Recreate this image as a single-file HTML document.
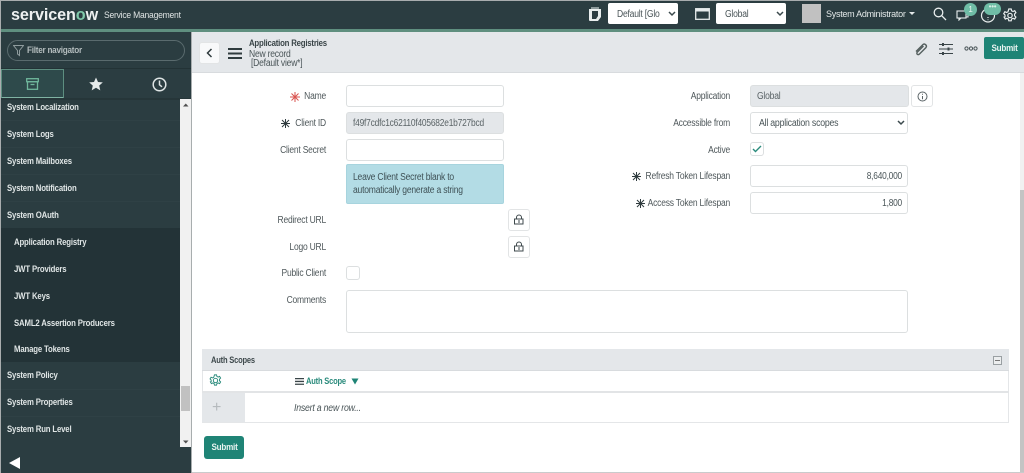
<!DOCTYPE html>
<html><head><meta charset="utf-8">
<style>
html,body{margin:0;padding:0}
body{width:1024px;height:473px;position:relative;overflow:hidden;background:#fff;font-family:"Liberation Sans",sans-serif;font-size:10px;color:#4a5558;letter-spacing:-.25px}
div,span,svg{position:absolute;box-sizing:border-box}
.t{white-space:nowrap;line-height:12px;transform-origin:0 50%;transform:scaleX(var(--s,.855))}
.r{transform-origin:100% 50%}
.nav{left:7px;color:#dfe5e5;font-weight:bold;font-size:9.5px;letter-spacing:-.2px;white-space:nowrap;line-height:12px;transform-origin:0 50%;transform:scaleX(.82)}
.sub{left:14px}
.lab{white-space:nowrap;text-align:right;line-height:12px;width:160px;color:#50595c;transform-origin:100% 50%;transform:scaleX(.85)}
.in{background:#fff;border:1px solid #dcdfe0;border-radius:3px;height:22px}
.ro{background:#e4e7ea}
.btn{background:#fff;border:1px solid #e2e4e5;border-radius:3px;width:22px;height:22px}
.sel{background:#fff;border-radius:2px;height:21px;color:#4a5558}
</style></head><body>
<!-- outer -->
<div style="left:0;top:0;width:1024px;height:1px;background:#a9adae"></div>
<div style="left:0;top:0;width:1px;height:473px;background:#a9adae"></div>
<div style="left:1px;top:1px;width:1023px;height:28px;background:#2b3d41"></div>
<div style="left:1px;top:29px;width:1023px;height:3px;background:#5f8f7f"></div>
<div class="t" style="--s:.95;left:11px;top:5px;font-size:17px;line-height:20px;font-weight:bold;color:#eef1f1;letter-spacing:-.1px">servicen<span style="position:static;color:#7fc8a9">o</span>w</div>
<div class="t" style="--s:.9;left:104px;top:10px;color:#dfe4e4;font-size:9.5px">Service Management</div>
<!-- header right -->
<svg style="left:588px;top:6px" width="14" height="16" viewBox="0 0 14 16"><path d="M3 1h8v2H3z" fill="#8d9a9b"/><path d="M1 3h8l4 0v8l-3 4H2a1 1 0 0 1-1-1z" fill="#e9eeee"/><path d="M4 5h6v5l-2 3H4z" fill="#2b3d41"/></svg>
<div class="sel" style="left:608px;top:3px;width:70px"><span class="t" style="left:9px;top:6px">Default [Glo</span></div>
<svg style="left:668px;top:11px" width="8" height="6"><path d="M1 1l3 3 3-3" fill="none" stroke="#3b4a4d" stroke-width="1.5"/></svg>
<svg style="left:695px;top:8px" width="15" height="12"><rect x=".7" y=".7" width="13.6" height="10.6" fill="none" stroke="#e6ebeb" stroke-width="1.3"/><rect x="1" y="1" width="13" height="2.5" fill="#e6ebeb"/></svg>
<div class="sel" style="left:716px;top:3px;width:70px"><span class="t" style="left:9px;top:6px">Global</span></div>
<svg style="left:776px;top:11px" width="8" height="6"><path d="M1 1l3 3 3-3" fill="none" stroke="#3b4a4d" stroke-width="1.5"/></svg>
<div style="left:802px;top:4px;width:19px;height:19px;background:#c1c1c1"></div>
<div class="t" style="--s:.95;left:826px;top:9px;color:#e4e9e9;font-size:9.5px;letter-spacing:-.3px">System Administrator</div>
<svg style="left:909px;top:12px" width="7" height="4"><path d="M0 0h6l-3 3z" fill="#e4e9e9"/></svg>
<svg style="left:933px;top:7px" width="14" height="14" fill="none" stroke="#e8eded" stroke-width="1.3"><circle cx="5.5" cy="5.5" r="4.3"/><path d="M8.7 8.700l4.300 4.300"/></svg>
<svg style="left:956px;top:8px" width="14" height="13" fill="none" stroke="#e8eded" stroke-width="1.1"><rect x="1" y="3" width="9" height="7"/><path d="M3 10v2l2-2"/><path d="M10 4h2v5h-2"/></svg>
<div style="left:964px;top:3px;width:13px;height:13px;border-radius:50%;background:#6fbda6;color:#eaf5f1;font-size:8px;line-height:13px;text-align:center">1</div>
<svg style="left:980px;top:7px" width="16" height="16" fill="none" stroke="#e8eded" stroke-width="1.2"><circle cx="8" cy="8.5" r="6.5"/><path d="M8 10v1M8 12.500v.6"/></svg>
<div style="left:984px;top:3px;width:17px;height:12px;border-radius:6px;background:#6fbda6;color:#d8efe6;font-size:8px;line-height:8px;text-align:center">•••</div>
<svg style="left:1003px;top:8px" width="14" height="15" viewBox="0 0 14 15" fill="none" stroke="#e8eded" stroke-width="1.2"><circle cx="7" cy="7.5" r="2.2"/><path d="M5.8 1h2.400l.4 1.800 1.500.7 1.600-.8 1.200 2-1.300 1.300v1.800l1.300 1.300-1.200 2-1.600-.8-1.500.7-.4 1.800H5.800l-.4-1.800-1.500-.7-1.600.8-1.200-2L2 8.800V7L.7 5.700l1.200-2 1.600.8 1.500-.7z"/></svg>

<!-- nav -->
<div style="left:1px;top:32px;width:190px;height:441px;background:#2b3d41"></div>
<div style="left:191px;top:32px;width:1px;height:441px;background:#a8adae"></div>
<div style="left:7px;top:40px;width:178px;height:21px;border:1px solid #5a6b6e;border-radius:11px"></div>
<svg style="left:13px;top:45px" width="11" height="12" fill="none" stroke="#8f9c9e" stroke-width="1"><path d="M.5 .5h10L6.500 5.500v5l-2-1.500V5.500z"/></svg>
<div class="t" style="--s:.86;left:27px;top:45px;color:#b4bdbe;font-size:9.5px;font-weight:bold;letter-spacing:-.3px">Filter navigator</div>
<div style="left:1px;top:68px;width:190px;height:1px;background:#233336"></div>
<div style="left:1px;top:69px;width:63px;height:30px;border:1px solid #5d8e80;border-bottom:2px solid #7fb3a3;background:#2e4a4b"></div>
<svg style="left:26px;top:78px" width="13" height="12" fill="none" stroke="#6fb79c" stroke-width="1.3"><rect x=".7" y=".7" width="11.600" height="3"/><rect x="1.500" y="3.700" width="10" height="7.600"/><path d="M4.500 6.500h4"/></svg>
<svg style="left:89px;top:77px" width="14" height="14" viewBox="0 0 14 14"><path d="M7 .5l2 4.500 4.800.4-3.600 3.200 1.100 4.800L7 10.800 2.700 13.400l1.100-4.800L.2 5.400 5 5z" fill="#e6ebeb"/></svg>
<svg style="left:152px;top:77px" width="15" height="15" fill="none" stroke="#dfe5e5" stroke-width="1.500"><circle cx="7.500" cy="7.500" r="6.300"/><path d="M7.500 3.500v4.300l2.500 2"/></svg>
<div style="left:1px;top:98px;width:190px;height:2px;background:#263639"></div>
<!-- list rows -->
<div style="left:1px;top:228px;width:179px;height:134px;background:#233337"></div>
<div style="left:1px;top:120px;width:179px;height:1px;background:#2f4145"></div>
<div style="left:1px;top:147px;width:179px;height:1px;background:#2f4145"></div>
<div style="left:1px;top:174px;width:179px;height:1px;background:#2f4145"></div>
<div style="left:1px;top:201px;width:179px;height:1px;background:#2f4145"></div>
<div style="left:1px;top:389px;width:179px;height:1px;background:#2f4145"></div>
<div style="left:1px;top:416px;width:179px;height:1px;background:#2f4145"></div>
<div class="nav" style="top:102px">System Localization</div>
<div class="nav" style="top:129px">System Logs</div>
<div class="nav" style="top:156px">System Mailboxes</div>
<div class="nav" style="top:183px">System Notification</div>
<div class="nav" style="top:210px">System OAuth</div>
<div class="nav sub" style="top:237px">Application Registry</div>
<div class="nav sub" style="top:264px">JWT Providers</div>
<div class="nav sub" style="top:291px">JWT Keys</div>
<div class="nav sub" style="top:318px">SAML2 Assertion Producers</div>
<div class="nav sub" style="top:344px">Manage Tokens</div>
<div class="nav" style="top:370px">System Policy</div>
<div class="nav" style="top:397px">System Properties</div>
<div class="nav" style="top:424px">System Run Level</div>
<!-- nav scrollbar -->
<div style="left:180px;top:99px;width:11px;height:348px;background:#f1f1f1"></div>
<div style="left:181px;top:386px;width:9px;height:25px;background:#c1c1c1"></div>
<svg style="left:183px;top:103px" width="6" height="4"><path d="M0 3.500h5.500L2.800 .5z" fill="#505050"/></svg>
<svg style="left:183px;top:440px" width="6" height="4"><path d="M0 .5h5.500L2.800 3.500z" fill="#505050"/></svg>
<svg style="left:8px;top:456px" width="13" height="14"><path d="M12 1v12L1 7z" fill="#fff"/></svg>

<!-- subheader -->
<div style="left:192px;top:32px;width:832px;height:41px;background:#e4e7ea"></div>
<div style="left:192px;top:72px;width:832px;height:1px;background:#d8dbde"></div>
<div class="btn" style="left:199px;top:42px;height:22px;width:21px;background:#f8f9fa"></div>
<svg style="left:206px;top:48px" width="7" height="10" fill="none" stroke="#2f3b3e" stroke-width="1.500"><path d="M5.500 1L1.500 5l4 4"/></svg>
<svg style="left:228px;top:48px" width="14" height="11"><path d="M0 0h14v2H0zM0 4.500h14v2H0zM0 9h14v2H0z" fill="#2f3b3e"/></svg>
<div class="t" style="--s:.87;left:249px;top:37px;color:#3a4548;font-weight:bold;font-size:9px;letter-spacing:-.25px">Application Registries</div>
<div class="t" style="left:249px;top:49px">New record</div>
<div class="t" style="left:251px;top:58px">[Default view*]</div>
<svg style="left:914px;top:42px" width="15" height="15" fill="none" stroke="#55605f" stroke-width="1.400"><path d="M2 9.500L9 2.500c1.500-1.500 4.500 1 3 3L5.500 12c-1.500 1.500-3.500-.2-2.300-1.700L9.500 4"/></svg>
<svg style="left:939px;top:42px" width="14" height="14"><path d="M0 2h14v1H0zM0 6.500h14v1H0zM0 11h14v1H0z" fill="#3a4548"/><path d="M3 1h2v3H3zM8.500 5.500h2v3h-2zM3 10h2v3H3z" fill="#3a4548"/></svg>
<svg style="left:964px;top:46px" width="14" height="5" fill="none" stroke="#4a5558"><circle cx="2.500" cy="2.500" r="1.600"/><circle cx="7" cy="2.500" r="1.600"/><circle cx="11.500" cy="2.500" r="1.600"/></svg>
<div style="left:984px;top:37px;width:40px;height:22px;background:#1f8476;border-radius:2px;color:#e8f3f0;text-align:center;line-height:22px;font-size:9px;font-weight:bold"><span style="position:static;display:inline-block;transform:scaleX(.9)">Submit</span></div>

<!-- form left -->
<svg style="left:290px;top:92px" width="10" height="10" stroke="#d9534f" stroke-width="1"><path d="M5 0v10M0 5h10M1.500 1.500l7 7M8.500 1.500l-7 7"/></svg>
<div class="lab" style="left:166px;top:91px">Name</div>
<div class="in" style="left:346px;top:85px;width:158px"></div>
<svg style="left:281px;top:119px" width="9" height="9" stroke="#2f3b3e" stroke-width="1"><path d="M4.500 0v9M0 4.500h9M1 1l7 7M8 1l-7 7"/></svg>
<div class="lab" style="left:166px;top:118px">Client ID</div>
<div class="in ro" style="left:346px;top:112px;width:158px"></div>
<div class="t" style="--s:.84;left:353px;top:118px;color:#5a6366">f49f7cdfc1c62110f405682e1b727bcd</div>
<div class="lab" style="left:166px;top:145px">Client Secret</div>
<div class="in" style="left:346px;top:139px;width:158px"></div>
<div style="left:346px;top:164px;width:158px;height:40px;background:#b3dce5;border:1px solid #a7d4de;border-radius:2px"></div>
<div class="t" style="--s:.855;left:353px;top:171px;color:#3f5156;line-height:13px">Leave Client Secret blank to<br>automatically generate a string</div>
<div class="lab" style="left:166px;top:215px">Redirect URL</div>
<div class="btn" style="left:508px;top:209px"></div>
<svg style="left:514px;top:214px" width="10" height="11" fill="none" stroke="#3f4a4d"><path d="M2.500 5V3.500a2.500 2.500 0 0 1 5 0V5"/><rect x=".5" y="5" width="8.500" height="5"/><path d="M5 6v3"/></svg>
<div class="lab" style="left:166px;top:242px">Logo URL</div>
<div class="btn" style="left:508px;top:236px"></div>
<svg style="left:514px;top:241px" width="10" height="11" fill="none" stroke="#3f4a4d"><path d="M2.500 5V3.500a2.500 2.500 0 0 1 5 0V5"/><rect x=".5" y="5" width="8.500" height="5"/><path d="M5 6v3"/></svg>
<div class="lab" style="left:166px;top:268px">Public Client</div>
<div class="in" style="left:346px;top:266px;width:14px;height:14px"></div>
<div class="lab" style="left:166px;top:295px">Comments</div>
<div class="in" style="left:346px;top:290px;width:562px;height:43px"></div>

<!-- form right -->
<div class="lab" style="left:570px;top:91px">Application</div>
<div class="in ro" style="left:750px;top:85px;width:159px"></div>
<div class="t" style="left:757px;top:91px;color:#5a6366">Global</div>
<div class="btn" style="left:911px;top:85px"></div>
<svg style="left:917px;top:91px" width="11" height="11" fill="none" stroke="#5a6366"><circle cx="5.500" cy="5.500" r="4.500"/><path d="M5.500 5v3.200M5.500 2.800v1"/></svg>
<div class="lab" style="left:570px;top:118px">Accessible from</div>
<div class="in" style="left:750px;top:112px;width:158px"></div>
<div class="t" style="--s:.875;left:759px;top:118px;color:#4a5558">All application scopes</div>
<svg style="left:897px;top:120px" width="8" height="6"><path d="M1 1l3 3 3-3" fill="none" stroke="#3b4a4d" stroke-width="1.500"/></svg>
<div class="lab" style="left:570px;top:145px">Active</div>
<div class="in" style="left:750px;top:142px;width:14px;height:14px"></div>
<svg style="left:752px;top:145px" width="10" height="8" fill="none" stroke="#2a8b7c" stroke-width="1.400"><path d="M1 4l2.500 2.500L9 1"/></svg>
<svg style="left:632px;top:172px" width="9" height="9" stroke="#2f3b3e"><path d="M4.500 0v9M0 4.500h9M1 1l7 7M8 1l-7 7"/></svg>
<div class="lab" style="left:570px;top:171px">Refresh Token Lifespan</div>
<div class="in" style="left:750px;top:165px;width:158px"></div>
<div class="t r" style="--s:.835;left:750px;top:171px;width:152px;text-align:right">8,640,000</div>
<svg style="left:636px;top:199px" width="9" height="9" stroke="#2f3b3e"><path d="M4.500 0v9M0 4.500h9M1 1l7 7M8 1l-7 7"/></svg>
<div class="lab" style="left:570px;top:198px">Access Token Lifespan</div>
<div class="in" style="left:750px;top:192px;width:158px"></div>
<div class="t r" style="--s:.835;left:750px;top:198px;width:152px;text-align:right">1,800</div>

<!-- related list -->
<div style="left:202px;top:349px;width:807px;height:74px;border:1px solid #e4e6e8;border-top:0"></div>
<div style="left:202px;top:349px;width:807px;height:21px;background:#e4e7ea"></div>
<div class="t" style="--s:.84;left:211px;top:354px;color:#3f4a4d;font-weight:bold;font-size:9px">Auth Scopes</div>
<div style="left:993px;top:356px;width:9px;height:9px;border:1px solid #9aa0a3;background:#eceeef"></div>
<div style="left:995px;top:360px;width:5px;height:1px;background:#777"></div>
<div style="left:202px;top:370px;width:807px;height:1px;background:#d8dbde"></div>
<div style="left:202px;top:391px;width:807px;height:2px;background:#e2e4e6"></div>
<svg style="left:209px;top:374px" width="13" height="13" viewBox="0 0 14 15" fill="none" stroke="#2a8b7c" stroke-width="1.100"><circle cx="7" cy="7.500" r="2.500"/><path d="M5.800 1h2.400l.4 1.800 1.500.7 1.600-.8 1.200 2-1.300 1.300v1.800l1.300 1.300-1.200 2-1.600-.8-1.500.7-.4 1.800H5.800l-.4-1.800-1.500-.7-1.600.8-1.200-2L2 8.800V7L.7 5.700l1.200-2 1.600.8 1.500-.7z"/></svg>
<svg style="left:295px;top:378px" width="9" height="7"><path d="M0 0h9v1.300H0zM0 2.800h9v1.300H0zM0 5.600h9v1.300H0z" fill="#3a4548"/></svg>
<div class="t" style="--s:.84;left:306px;top:375px;color:#2a8b7c;font-weight:bold;font-size:9px">Auth Scope</div>
<svg style="left:351px;top:378px" width="8" height="7"><path d="M.5 .5h7L4 6.500z" fill="#1f8476"/></svg>
<div style="left:202px;top:393px;width:43px;height:29px;background:#e4e7ea"></div>
<div class="t" style="--s:1;left:212px;top:400px;font-size:16px;line-height:16px;color:#b5babd">+</div>
<div class="t" style="--s:.875;left:294px;top:403px;font-style:italic;color:#4a5558">Insert a new row...</div>
<div style="left:204px;top:436px;width:40px;height:23px;background:#1f8476;border-radius:3px;color:#e8f3f0;text-align:center;line-height:23px;font-size:9px;font-weight:bold"><span style="position:static;display:inline-block;transform:scaleX(.9)">Submit</span></div>

<!-- page scrollbar and bottom -->
<div style="left:1020px;top:73px;width:4px;height:400px;background:#f1f1f1"></div>
<div style="left:1020px;top:190px;width:4px;height:283px;background:#c4c4c4"></div>
<div style="left:192px;top:472px;width:832px;height:1px;background:#c9cbcc"></div>
</body></html>
